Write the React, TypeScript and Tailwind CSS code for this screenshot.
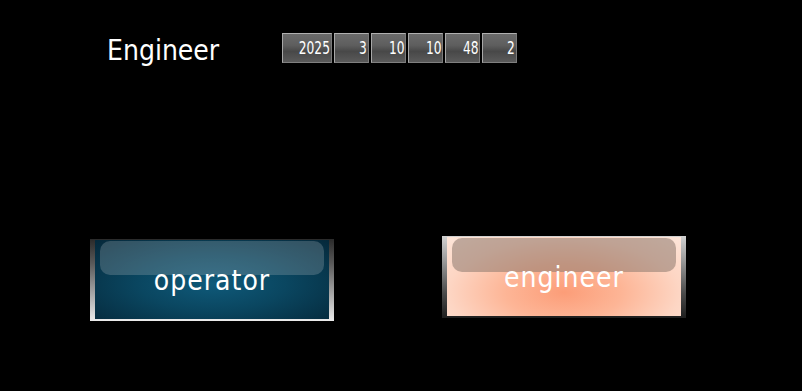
import React from "react";

const stamp = [
  { value: "2025", w: "w-[50px]" },
  { value: "3", w: "w-[35px]" },
  { value: "10", w: "w-[35px]" },
  { value: "10", w: "w-[35px]" },
  { value: "48", w: "w-[35px]" },
  { value: "2", w: "w-[35px]" },
];

const narrow = "font-['Liberation_Sans_Narrow','DejaVu_Sans_Condensed',sans-serif]";

function StampBox({ value, w }: { value: string; w: string }) {
  return (
    <div
      className={`${w} h-[30px] flex items-center justify-end pr-[1px] border border-t-[#b0b0b0] border-l-[#a8a8a8] border-r-[#7a7a7a] border-b-[#808080] bg-[linear-gradient(180deg,#6a6a6a_0%,#5e5e5e_40%,#525252_52%,#484848_62%,#5a5a5a_100%)]`}
    >
      <span className={`inline-block origin-right scale-x-[0.8] text-white text-[17px] leading-none ${narrow}`}>{value}</span>
    </div>
  );
}

export default function App() {
  return (
    <div className="w-[802px] h-[391px] bg-black overflow-hidden">
      {/* header: title + date/time boxes */}
      <div className="flex items-start pt-[33px]">
        <div className={`ml-[107px] w-[175px] mt-[3px] text-white text-[28px] leading-[30px] ${narrow}`}>
          Engineer
        </div>
        <div className="flex gap-[2px]">
          {stamp.map((s, i) => (
            <StampBox key={i} value={s.value} w={s.w} />
          ))}
        </div>
      </div>

      {/* mode buttons */}
      <div className="flex items-start mt-[170px]">
        {/* operator (raised) */}
        <div className="ml-[90px] mt-[3px] w-[244px] h-[82px] flex flex-col pt-[1px] pb-[2px] px-[5px] bg-[linear-gradient(180deg,#2a2a2a_0%,#5a5a5a_30%,#b8b8b8_75%,#ececec_100%)]">
          <div className="relative flex-1 flex items-center justify-center pt-[2px] bg-[radial-gradient(ellipse_at_50%_55%,#0f5a7a_0%,#0a4660_45%,#05283a_100%)]">
            <div className="absolute left-[5px] right-[5px] top-[1px] h-[34px] rounded-[10px] bg-[rgba(160,172,178,0.3)]" />
            <span className={`relative text-white text-[28px] leading-[28px] tracking-[1px] ${narrow}`}>operator</span>
          </div>
        </div>

        {/* engineer (pressed) */}
        <div className="ml-[108px] w-[244px] h-[82px] flex flex-col pt-[1px] pb-[2px] px-[5px] bg-[linear-gradient(180deg,#d2d2d2_0%,#9a9a9a_30%,#4a4a4a_70%,#1e1e1e_100%)]">
          <div className="relative flex-1 flex items-center justify-center pt-[3px] bg-[radial-gradient(ellipse_at_50%_70%,#fc9d78_0%,#fdb596_35%,#fdd6c4_70%,#fde6da_100%)]">
            <div className="absolute left-[5px] right-[5px] top-[1px] h-[34px] rounded-[10px] bg-[rgba(140,120,110,0.55)]" />
            <span className={`relative text-white text-[28px] leading-[28px] tracking-[1px] ${narrow}`}>engineer</span>
          </div>
        </div>
      </div>
    </div>
  );
}
